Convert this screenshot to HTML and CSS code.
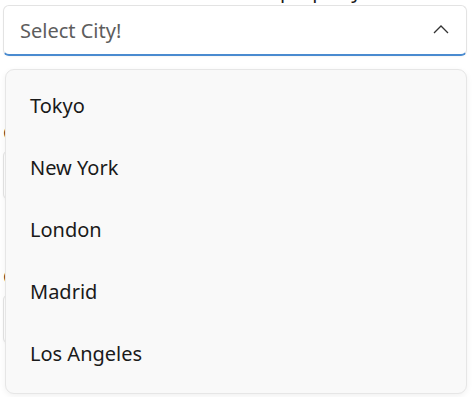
FILE: index.html
```html
<!DOCTYPE html>
<html lang="en">
<head>
    <meta charset="UTF-8">
    <meta name="viewport" content="width=device-width, initial-scale=1.0">
    <title>ComboBox</title>
    <link rel="stylesheet" href="styles.css">
</head>
<body>
    <div class="page">
        <div class="heading">ComboBox with ItemsSource property</div>

        <div class="combo-wrap">
            <div class="combo open">
                <span class="placeholder">Select City!</span>
                <svg class="chevron" width="16" height="9" viewBox="0 0 16 9">
                    <path d="M1 8 L8 1 L15 8" fill="none" stroke="#333" stroke-width="1.3"/>
                </svg>
            </div>

            <div class="dropdown">
                <div class="item">Tokyo</div>
                <div class="item">New York</div>
                <div class="item">London</div>
                <div class="item">Madrid</div>
                <div class="item">Los Angeles</div>
            </div>
        </div>

        <div class="field">
            <div class="label">Choose a font size</div>
            <div class="combo"></div>
        </div>

        <div class="field">
            <div class="label">Choose a colour</div>
            <div class="combo"></div>
        </div>
    </div>
</body>
</html>
```

FILE: styles.css
```css
body {
    margin: 0;
    padding: 0;
    min-height: 100vh;
    background-color: #fff;
    font-family: "Noto Sans", "Open Sans", sans-serif;
    color: #1b1b1b;
}

.page {
    padding: 0 7px 60px 3px;
}

.heading {
    font-size: 20px;
    line-height: 26px;
    margin-top: -22px;
    padding-left: 0;
    white-space: nowrap;
}

.combo-wrap {
    position: relative;
    margin-top: 1px;
}

.combo {
    height: 48px;
    border: 1px solid #e3e3e3;
    border-radius: 6px;
    background-color: #fff;
    box-shadow: 0 1px 2px rgba(0, 0, 0, 0.04);
    display: flex;
    align-items: center;
    justify-content: space-between;
    padding: 0 17px 0 16px;
}

.combo.open {
    border-bottom: 2px solid #4a8bd0;
}

.placeholder {
    font-size: 20px;
    color: #5d5d5d;
}

.chevron {
    margin-top: -2px;
}

.dropdown {
    position: absolute;
    top: 64px;
    left: 2px;
    right: 0;
    z-index: 2;
    background-color: #f9f9f9;
    border: 1px solid #e6e6e6;
    border-radius: 9px;
    box-shadow: 0 2px 6px rgba(0, 0, 0, 0.06);
    padding: 4px 0 9px 0;
}

.item {
    height: 62px;
    display: flex;
    align-items: center;
    padding-left: 24px;
    font-size: 20px;
    color: #1a1a1a;
}

.field {
    margin-top: 63px;
}

.label {
    font-size: 20px;
    line-height: 28px;
    margin-bottom: 3px;
}
```
